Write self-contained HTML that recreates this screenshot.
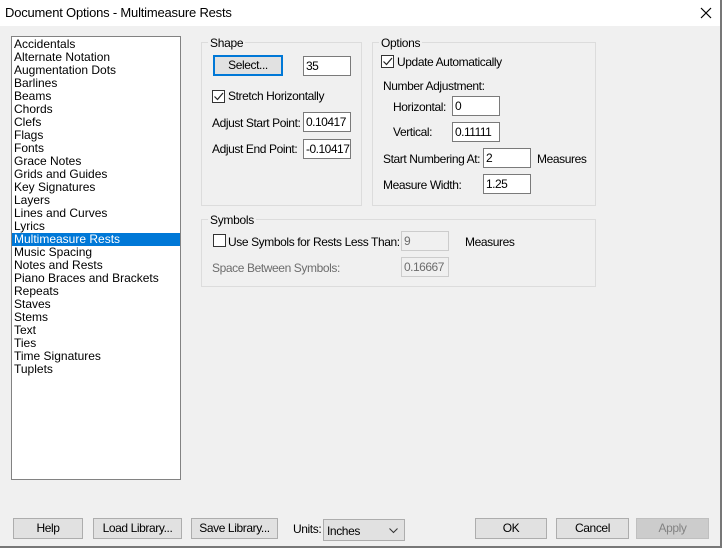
<!DOCTYPE html><html><head><style>
body{margin:0;width:722px;height:548px;background:#f0f0f0;font-family:"Liberation Sans",sans-serif;font-size:12px;color:#000;position:relative;overflow:hidden}
.a{position:absolute;white-space:nowrap;letter-spacing:-0.4px}
.tb{position:absolute;background:#fff;border:1px solid #7a7a7a;box-sizing:border-box;padding:2px 0 0 2px;font-size:12px;letter-spacing:-0.5px;white-space:nowrap;overflow:hidden}
.dis{border-color:#ccc;background:#f0f0f0;color:#6d6d6d}
.btn{position:absolute;background:#e1e1e1;border:1px solid #adadad;box-sizing:border-box;text-align:center;line-height:19px;letter-spacing:-0.4px}
.grp{position:absolute;border:1px solid #dcdcdc;box-sizing:border-box}
.gl{position:absolute;background:#f0f0f0;padding:0 2px;letter-spacing:-0.3px}
.cb{position:absolute;width:13px;height:13px;border:1px solid #333;box-sizing:border-box;background:#fff}
.list div{height:13px;line-height:13px;padding-left:2px}
</style></head><body>
<div class="a" style="left:0;top:0;width:722px;height:26px;background:#fff"></div>
<div class="a" style="left:720px;top:0;width:2px;height:548px;background:#777"></div>
<div class="a" style="left:0;top:546px;width:722px;height:2px;background:#777"></div>
<div class="a" style="left:5px;top:5px;font-size:13px;letter-spacing:-0.2px">Document Options - Multimeasure Rests</div>
<svg class="a" style="left:700px;top:7px" width="12" height="12"><path d="M1 1L11 11M11 1L1 11" stroke="#000" stroke-width="1.2"/></svg>
<div class="a list" style="left:11px;top:36px;width:170px;height:444px;background:#fff;border:1px solid #828282;box-sizing:border-box;padding-top:1px;letter-spacing:0">
<div>Accidentals</div><div>Alternate Notation</div><div>Augmentation Dots</div><div>Barlines</div><div>Beams</div><div>Chords</div><div>Clefs</div><div>Flags</div><div>Fonts</div><div>Grace Notes</div><div>Grids and Guides</div><div>Key Signatures</div><div>Layers</div><div>Lines and Curves</div><div>Lyrics</div><div style="background:#0078d7;color:#fff">Multimeasure Rests</div><div>Music Spacing</div><div>Notes and Rests</div><div>Piano Braces and Brackets</div><div>Repeats</div><div>Staves</div><div>Stems</div><div>Text</div><div>Ties</div><div>Time Signatures</div><div>Tuplets</div></div>

<div class="grp" style="left:201px;top:42px;width:161px;height:164px"></div>
<div class="gl" style="left:208px;top:36px">Shape</div>
<div class="btn" style="left:213px;top:55px;width:70px;height:21px;border:2px solid #0078d7;line-height:17px">Select...</div>
<div class="tb" style="left:303px;top:56px;width:48px;height:20px">35</div>
<div class="cb" style="left:212px;top:90px"><svg width="11" height="11" style="display:block"><path d="M1.5 5.5L4.5 8.5L10 2" stroke="#222" fill="none" stroke-width="1.2"/></svg></div>
<div class="a" style="left:228px;top:89px">Stretch Horizontally</div>
<div class="a" style="left:212px;top:116px">Adjust Start Point:</div>
<div class="tb" style="left:303px;top:112px;width:48px;height:20px">0.10417</div>
<div class="a" style="left:212px;top:142px">Adjust End Point:</div>
<div class="tb" style="left:303px;top:139px;width:48px;height:20px">-0.10417</div>

<div class="grp" style="left:372px;top:42px;width:224px;height:164px"></div>
<div class="gl" style="left:379px;top:36px">Options</div>
<div class="cb" style="left:381px;top:55px"><svg width="11" height="11" style="display:block"><path d="M1.5 5.5L4.5 8.5L10 2" stroke="#222" fill="none" stroke-width="1.2"/></svg></div>
<div class="a" style="left:397px;top:55px">Update Automatically</div>
<div class="a" style="left:383px;top:79px">Number Adjustment:</div>
<div class="a" style="left:393px;top:100px">Horizontal:</div>
<div class="tb" style="left:452px;top:96px;width:48px;height:20px">0</div>
<div class="a" style="left:393px;top:125px">Vertical:</div>
<div class="tb" style="left:452px;top:122px;width:48px;height:20px">0.11111</div>
<div class="a" style="left:383px;top:152px">Start Numbering At:</div>
<div class="tb" style="left:483px;top:148px;width:48px;height:20px">2</div>
<div class="a" style="left:537px;top:152px">Measures</div>
<div class="a" style="left:383px;top:178px">Measure Width:</div>
<div class="tb" style="left:483px;top:174px;width:48px;height:20px">1.25</div>

<div class="grp" style="left:201px;top:219px;width:395px;height:68px"></div>
<div class="gl" style="left:208px;top:213px">Symbols</div>
<div class="cb" style="left:213px;top:234px"></div>
<div class="a" style="left:228px;top:235px">Use Symbols for Rests Less Than:</div>
<div class="tb dis" style="left:401px;top:231px;width:48px;height:20px">9</div>
<div class="a" style="left:465px;top:235px">Measures</div>
<div class="a" style="left:212px;top:261px;color:#6d6d6d">Space Between Symbols:</div>
<div class="tb dis" style="left:401px;top:257px;width:48px;height:20px">0.16667</div>

<div class="btn" style="left:13px;top:518px;width:70px;height:21px">Help</div>
<div class="btn" style="left:93px;top:518px;width:89px;height:21px">Load Library...</div>
<div class="btn" style="left:191px;top:518px;width:87px;height:21px">Save Library...</div>
<div class="a" style="left:293px;top:522px">Units:</div>
<div class="btn" style="left:323px;top:519px;width:82px;height:22px;text-align:left;padding-left:3px;line-height:22px">Inches<svg style="position:absolute;right:6px;top:8px" width="9" height="6"><path d="M0.5 0.5L4.5 4.5L8.5 0.5" stroke="#333" fill="none"/></svg></div>
<div class="btn" style="left:475px;top:518px;width:72px;height:21px">OK</div>
<div class="btn" style="left:556px;top:518px;width:73px;height:21px">Cancel</div>
<div class="btn" style="left:636px;top:518px;width:73px;height:21px;background:#ccc;border-color:#bfbfbf;color:#838383">Apply</div>
</body></html>
